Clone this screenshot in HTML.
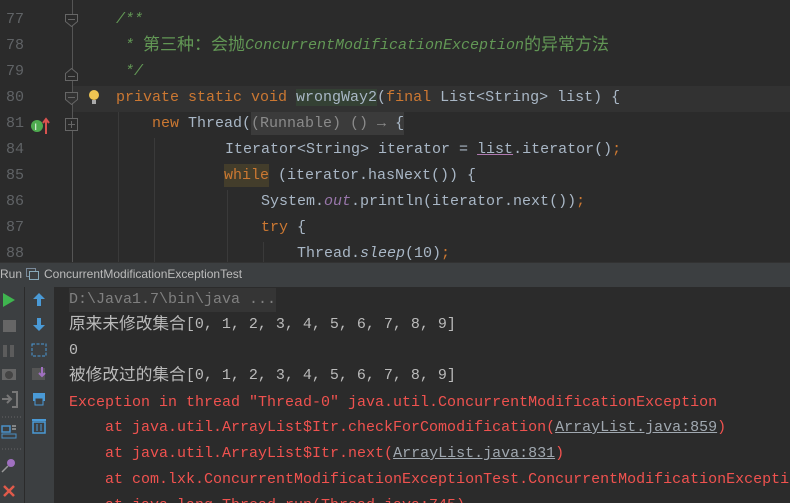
<!DOCTYPE html>
<html><head><meta charset="utf-8"><style>
*{margin:0;padding:0}
body{width:790px;height:503px;overflow:hidden;background:#2b2b2b;position:relative;font-family:"Liberation Mono","Noto Sans CJK SC",monospace;font-size:15px}
#w{position:absolute;left:0;top:0;width:790px;height:503px;overflow:hidden}
.a{position:absolute;white-space:pre;line-height:20px}
.ln{position:absolute;left:6px;color:#606366;font-size:15px;width:20px;line-height:20px}
.c{color:#a9b7c6}
.k{color:#cc7832}
.cm{color:#629755;font-style:italic}
.cj{font-family:"Noto Sans CJK SC",sans-serif;font-size:17px;font-style:normal;line-height:20px;vertical-align:top;position:relative;top:-3px}
.cc{font-family:"Noto Sans CJK SC",sans-serif;font-size:16.7px;line-height:20px;vertical-align:top;position:relative;top:-3px}
.g{position:absolute;width:1px;background:#3a3a3a}
.red{color:#f0524f}
.u{text-decoration:underline}
</style></head><body><div id="w">
<div class="a" style="left:72px;top:86px;width:718px;height:26px;background:#323232"></div>
<div class="a" style="left:72px;top:0;width:1px;height:262px;background:#555"></div>
<div class="g" style="left:118px;top:112px;height:150px"></div>
<div class="g" style="left:154px;top:138px;height:124px"></div>
<div class="g" style="left:227px;top:190px;height:72px"></div>
<div class="g" style="left:263px;top:242px;height:20px"></div>

<div class="ln" style="top:10px">77</div>
<div class="ln" style="top:36px">78</div>
<div class="ln" style="top:62px">79</div>
<div class="ln" style="top:88px">80</div>
<div class="ln" style="top:114px">81</div>
<div class="ln" style="top:140px">84</div>
<div class="ln" style="top:166px">85</div>
<div class="ln" style="top:192px">86</div>
<div class="ln" style="top:218px">87</div>
<div class="ln" style="top:244px">88</div>

<svg class="a" style="left:64px;top:0" width="18" height="262">
<g fill="#2b2b2b" stroke="#666" stroke-width="1">
<path d="M1.5 14.5h12v7l-6 5l-6-5z"/><path d="M4 19.5h7"/>
<path d="M1.5 73.5l6-5l6 5v7h-12z"/><path d="M4 76.5h7"/>
<path d="M1.5 92.5h12v7l-6 5l-6-5z" fill="#323232"/><path d="M4 97.5h7"/>
<rect x="1.5" y="118.5" width="12" height="12"/><path d="M4 124.5h7M7.5 121v7"/>
</g></svg>
<svg class="a" style="left:87px;top:89px" width="14" height="16"><circle cx="7" cy="6" r="5" fill="#f0c552"/><rect x="5" y="11" width="4" height="4" fill="#aaa"/></svg>
<svg class="a" style="left:30px;top:116px" width="22" height="20"><circle cx="7" cy="10" r="6" fill="#4eaa4f"/><text x="4.5" y="14" font-size="9" fill="#fff" font-family="Liberation Sans">I</text><path d="M16 18V4M13 7l3-4l3 4" stroke="#d9534f" stroke-width="2" fill="none"/></svg>

<div class="a cm" style="left:116px;top:10px">/**</div>
<div class="a cm" style="left:116px;top:36px"> * <span class="cj">第三种：会抛</span>ConcurrentModificationException<span class="cj">的异常方法</span></div>
<div class="a cm" style="left:116px;top:62px"> */</div>
<div class="a c" style="left:116px;top:88px"><span class="k">private static void </span><span style="background:#344134">wrongWay2</span>(<span class="k">final </span>List&lt;String&gt; list) {</div>
<div class="a c" style="left:152px;top:114px"><span class="k">new </span>Thread(<span style="background:#3b3b3b;color:#8a8a8a;padding:3px 0">(Runnable) () → </span><span style="background:#3b3b3b;padding:3px 0">{</span></div>
<div class="a c" style="left:225px;top:140px">Iterator&lt;String&gt; iterator = <span class="u" style="text-decoration-color:#b07ab0">list</span>.iterator()<span class="k">;</span></div>
<div class="a c" style="left:224px;top:166px"><span class="k" style="background:#433d2b;padding:3px 0">while</span> (iterator.hasNext()) {</div>
<div class="a c" style="left:261px;top:192px">System.<span style="color:#9876aa;font-style:italic">out</span>.println(iterator.next())<span class="k">;</span></div>
<div class="a c" style="left:261px;top:218px"><span class="k">try </span>{</div>
<div class="a c" style="left:297px;top:244px">Thread.<span style="font-style:italic">sleep</span>(10)<span class="k">;</span></div>

<div class="a" style="left:0;top:262px;width:790px;height:24px;background:#3c3f41;border-top:1px solid #323232"></div>
<div class="a" style="left:0;top:264px;color:#bbb;font-family:'Liberation Sans',sans-serif;font-size:12px">Run</div>
<svg class="a" style="left:26px;top:268px" width="14" height="12"><rect x="0.5" y="0.5" width="9" height="8" fill="none" stroke="#7a8a9a"/><rect x="3.5" y="3.5" width="9" height="8" fill="#3c3f41" stroke="#8ab"/></svg>
<div class="a" style="left:44px;top:264px;color:#bbb;font-family:'Liberation Sans',sans-serif;font-size:12px">ConcurrentModificationExceptionTest</div>

<div class="a" style="left:0;top:287px;width:24px;height:216px;background:#3c3f41"></div>
<div class="a" style="left:24px;top:287px;width:1px;height:216px;background:#2b2b2b"></div>
<div class="a" style="left:25px;top:287px;width:29px;height:216px;background:#3c3f41"></div>
<svg class="a" style="left:0;top:287px" width="54" height="216">
<path d="M3 6l12 7l-12 7z" fill="#3fb54f"/>
<rect x="3" y="33" width="13" height="12" fill="#666"/>
<rect x="3" y="58" width="4" height="12" fill="#5c5c5c"/><rect x="10" y="58" width="4" height="12" fill="#5c5c5c"/>
<rect x="2" y="82" width="14" height="11" fill="#666"/><circle cx="9" cy="88" r="4" fill="#444"/>
<path d="M2 112h8M7 108l4 4l-4 4M12 105h5v15h-5" stroke="#777" stroke-width="2" fill="none"/>
<path d="M2 130h20" stroke="#666" stroke-dasharray="1 2"/>
<rect x="2" y="139" width="8" height="6" fill="none" stroke="#4a90c8" stroke-width="1.5"/><rect x="2" y="147" width="14" height="4" fill="none" stroke="#4a90c8"/><path d="M12 139h4M12 142h4" stroke="#ccc"/>
<path d="M2 162h20" stroke="#666" stroke-dasharray="1 2"/>
<circle cx="11" cy="176" r="4" fill="#a070c0"/><path d="M8 179l-6 6" stroke="#999" stroke-width="1.5"/>
<path d="M4 199l10 10M14 199l-10 10" stroke="#e05a4a" stroke-width="2.5"/>
<path d="M39 6l-6 6h4v7h4v-7h4z" fill="#4a9ad6"/>
<path d="M39 44l-6-6h4v-7h4v7h4z" fill="#4a9ad6"/>
<rect x="32" y="57" width="14" height="12" fill="none" stroke="#4a9ad6" stroke-dasharray="3 1.5"/>
<rect x="32" y="81" width="13" height="12" fill="#555"/><path d="M42 80v9M39 86l3 3l3-3" stroke="#a070c0" stroke-width="2" fill="none"/>
<rect x="33" y="106" width="12" height="8" fill="#4a9ad6"/><rect x="35" y="111" width="8" height="7" fill="#3c3f41" stroke="#4a9ad6"/>
<rect x="32" y="132" width="14" height="2" fill="#4a9ad6"/><rect x="33" y="135" width="12" height="11" fill="none" stroke="#4a9ad6" stroke-width="1.5"/><path d="M37 137v7M41 137v7" stroke="#4a9ad6"/>
</svg>

<div class="a" style="left:69px;top:288px;height:24px;width:207px;background:#353535"></div>
<div class="a" style="left:69px;top:290px;color:#808080">D:\Java1.7\bin\java ...</div>
<div class="a" style="left:69px;top:315px;color:#bbb"><span class="cc">原来未修改集合</span>[0, 1, 2, 3, 4, 5, 6, 7, 8, 9]</div>
<div class="a" style="left:69px;top:341px;color:#bbb">0</div>
<div class="a" style="left:69px;top:366px;color:#bbb"><span class="cc">被修改过的集合</span>[0, 1, 2, 3, 4, 5, 6, 7, 8, 9]</div>
<div class="a red" style="left:69px;top:393px">Exception in thread "Thread-0" java.util.ConcurrentModificationException</div>
<div class="a red" style="left:69px;top:418px">    at java.util.ArrayList$Itr.checkForComodification(<span class="u" style="color:#a0a8b0">ArrayList.java:859</span>)</div>
<div class="a red" style="left:69px;top:444px">    at java.util.ArrayList$Itr.next(<span class="u" style="color:#a0a8b0">ArrayList.java:831</span>)</div>
<div class="a red" style="left:69px;top:470px">    at com.lxk.ConcurrentModificationExceptionTest.ConcurrentModificationExcepti</div>
<div class="a red" style="left:69px;top:496px">    at java.lang.Thread.run(Thread.java:745)</div>
</div></body></html>
